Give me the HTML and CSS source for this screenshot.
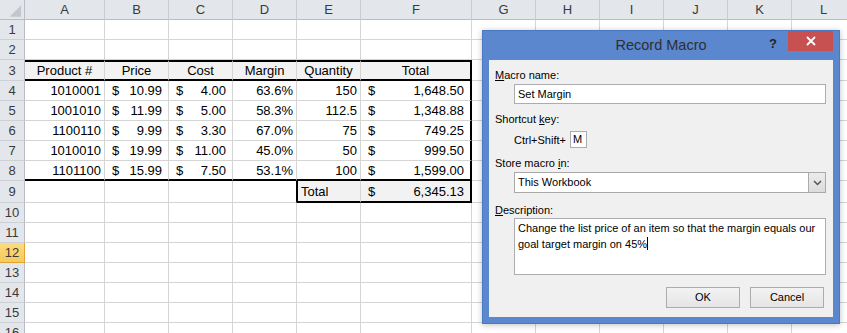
FILE: index.html
```html
<!DOCTYPE html>
<html lang="en">

<head>
    <meta charset="UTF-8">
    <title>Record Macro</title>
    <link rel="stylesheet" href="styles.css">
</head>

<body>
    <div class="sheet">
        <!-- column headers -->
        <div class="corner">
            <svg width="25" height="20" viewBox="0 0 25 20"><polygon points="22,5 22,17 10,17" fill="#c3c7cc" /></svg>
        </div>
        <div class="ch">A</div>
        <div class="ch">B</div>
        <div class="ch">C</div>
        <div class="ch">D</div>
        <div class="ch">E</div>
        <div class="ch">F</div>
        <div class="ch">G</div>
        <div class="ch">H</div>
        <div class="ch">I</div>
        <div class="ch">J</div>
        <div class="ch">K</div>
        <div class="ch">L</div>

        <!-- row 1 -->
        <div class="rh">1</div>
        <div class="c"></div><div class="c"></div><div class="c"></div><div class="c"></div>
        <div class="c"></div><div class="c"></div><div class="c"></div><div class="c"></div>
        <div class="c"></div><div class="c"></div><div class="c"></div><div class="c"></div>

        <!-- row 2 -->
        <div class="rh">2</div>
        <div class="c"></div><div class="c"></div><div class="c"></div><div class="c"></div>
        <div class="c"></div><div class="c"></div><div class="c"></div><div class="c"></div>
        <div class="c"></div><div class="c"></div><div class="c"></div><div class="c"></div>

        <!-- row 3 : table header -->
        <div class="rh">3</div>
        <div class="c hd mid">Product #</div>
        <div class="c hd mid">Price</div>
        <div class="c hd mid">Cost</div>
        <div class="c hd mid">Margin</div>
        <div class="c hd mid">Quantity</div>
        <div class="c hd mid last">Total</div>
        <div class="c"></div><div class="c"></div><div class="c"></div>
        <div class="c"></div><div class="c"></div><div class="c"></div>

        <!-- row 4 -->
        <div class="rh">4</div>
        <div class="c num">1010001</div>
        <div class="c acc"><span>$</span><span>10.99</span></div>
        <div class="c acc"><span>$</span><span>4.00</span></div>
        <div class="c num">63.6%</div>
        <div class="c num">150</div>
        <div class="c acc last"><span>$</span><span>1,648.50</span></div>
        <div class="c"></div><div class="c"></div><div class="c"></div>
        <div class="c"></div><div class="c"></div><div class="c"></div>

        <!-- row 5 -->
        <div class="rh">5</div>
        <div class="c num">1001010</div>
        <div class="c acc"><span>$</span><span>11.99</span></div>
        <div class="c acc"><span>$</span><span>5.00</span></div>
        <div class="c num">58.3%</div>
        <div class="c num">112.5</div>
        <div class="c acc last"><span>$</span><span>1,348.88</span></div>
        <div class="c"></div><div class="c"></div><div class="c"></div>
        <div class="c"></div><div class="c"></div><div class="c"></div>

        <!-- row 6 -->
        <div class="rh">6</div>
        <div class="c num">1100110</div>
        <div class="c acc"><span>$</span><span>9.99</span></div>
        <div class="c acc"><span>$</span><span>3.30</span></div>
        <div class="c num">67.0%</div>
        <div class="c num">75</div>
        <div class="c acc last"><span>$</span><span>749.25</span></div>
        <div class="c"></div><div class="c"></div><div class="c"></div>
        <div class="c"></div><div class="c"></div><div class="c"></div>

        <!-- row 7 -->
        <div class="rh">7</div>
        <div class="c num">1010010</div>
        <div class="c acc"><span>$</span><span>19.99</span></div>
        <div class="c acc"><span>$</span><span>11.00</span></div>
        <div class="c num">45.0%</div>
        <div class="c num">50</div>
        <div class="c acc last"><span>$</span><span>999.50</span></div>
        <div class="c"></div><div class="c"></div><div class="c"></div>
        <div class="c"></div><div class="c"></div><div class="c"></div>

        <!-- row 8 -->
        <div class="rh">8</div>
        <div class="c num bot">1101100</div>
        <div class="c acc bot"><span>$</span><span>15.99</span></div>
        <div class="c acc bot"><span>$</span><span>7.50</span></div>
        <div class="c num bot">53.1%</div>
        <div class="c num bot">100</div>
        <div class="c acc bot last"><span>$</span><span>1,599.00</span></div>
        <div class="c"></div><div class="c"></div><div class="c"></div>
        <div class="c"></div><div class="c"></div><div class="c"></div>

        <!-- row 9 : total -->
        <div class="rh">9</div>
        <div class="c"></div><div class="c"></div><div class="c"></div>
        <div class="c tl"></div>
        <div class="c tot">Total</div>
        <div class="c acc tot last"><span>$</span><span>6,345.13</span></div>
        <div class="c"></div><div class="c"></div><div class="c"></div>
        <div class="c"></div><div class="c"></div><div class="c"></div>

        <!-- rows 10 - 16 -->
        <div class="rh">10</div>
        <div class="c"></div><div class="c"></div><div class="c"></div><div class="c"></div>
        <div class="c"></div><div class="c"></div><div class="c"></div><div class="c"></div>
        <div class="c"></div><div class="c"></div><div class="c"></div><div class="c"></div>

        <div class="rh">11</div>
        <div class="c"></div><div class="c"></div><div class="c"></div><div class="c"></div>
        <div class="c"></div><div class="c"></div><div class="c"></div><div class="c"></div>
        <div class="c"></div><div class="c"></div><div class="c"></div><div class="c"></div>

        <div class="rh sel">12</div>
        <div class="c"></div><div class="c"></div><div class="c"></div><div class="c"></div>
        <div class="c"></div><div class="c"></div><div class="c"></div><div class="c"></div>
        <div class="c"></div><div class="c"></div><div class="c"></div><div class="c"></div>

        <div class="rh">13</div>
        <div class="c"></div><div class="c"></div><div class="c"></div><div class="c"></div>
        <div class="c"></div><div class="c"></div><div class="c"></div><div class="c"></div>
        <div class="c"></div><div class="c"></div><div class="c"></div><div class="c"></div>

        <div class="rh">14</div>
        <div class="c"></div><div class="c"></div><div class="c"></div><div class="c"></div>
        <div class="c"></div><div class="c"></div><div class="c"></div><div class="c"></div>
        <div class="c"></div><div class="c"></div><div class="c"></div><div class="c"></div>

        <div class="rh">15</div>
        <div class="c"></div><div class="c"></div><div class="c"></div><div class="c"></div>
        <div class="c"></div><div class="c"></div><div class="c"></div><div class="c"></div>
        <div class="c"></div><div class="c"></div><div class="c"></div><div class="c"></div>

        <div class="rh">16</div>
        <div class="c"></div><div class="c"></div><div class="c"></div><div class="c"></div>
        <div class="c"></div><div class="c"></div><div class="c"></div><div class="c"></div>
        <div class="c"></div><div class="c"></div><div class="c"></div><div class="c"></div>
    </div>

    <!-- Record Macro window -->
    <div class="dialog">
        <div class="titlebar">
            <div></div>
            <div class="title">Record Macro</div>
            <div class="controls">
                <span class="help">?</span>
                <span class="close">
                    <svg width="10" height="10" viewBox="0 0 10 10">
                        <path d="M1 1 L9 9 M9 1 L1 9" stroke="#fff" stroke-width="1.8" />
                    </svg>
                </span>
            </div>
        </div>

        <div class="panel">
            <div class="label"><u>M</u>acro name:</div>
            <div class="field">Set Margin</div>

            <div class="label label-gap">Shortcut <u>k</u>ey:</div>
            <div class="shortcut">
                <span>Ctrl+Shift+</span>
                <span class="keybox">M</span>
            </div>

            <div class="label label-gap">Store macro <u>i</u>n:</div>
            <div class="select">
                <span class="select-text">This Workbook</span>
                <span class="dd">
                    <svg width="9" height="6" viewBox="0 0 9 6">
                        <path d="M1 1 L4.5 4.5 L8 1" fill="none" stroke="#555" stroke-width="1.5" />
                    </svg>
                </span>
            </div>

            <div class="label desc-label"><u>D</u>escription:</div>
            <div class="desc">Change the list price of an item so that the margin equals our<br>goal target margin on 45%<span class="caret"></span></div>

            <div class="buttons">
                <div class="btn">OK</div>
                <div class="btn">Cancel</div>
            </div>
        </div>
    </div>
</body>

</html>
```

FILE: styles.css
```css
* {
    margin: 0;
    padding: 0;
    box-sizing: border-box;
}

html,
body {
    width: 100%;
    height: 100%;
    overflow: hidden;
    background: #fff;
}

body {
    position: relative;
    font-family: "Liberation Sans", Arial, sans-serif;
}

/* ---------- worksheet ---------- */

.sheet {
    display: grid;
    grid-template-columns: 25px 80px 64px 64px 64px 64px 111px 64px 64px 64px 64px 64px 64px;
    grid-template-rows: 20px 20px 20px 21px 20px 20px 20px 20px 20px 22px 20px 20px 20px 20px 20px 20px 20px;
    font-size: 13px;
    color: #000;
}

.corner,
.ch,
.rh {
    background: #e3e6ea;
    color: #3a3a3a;
    display: flex;
    align-items: center;
    justify-content: center;
}

.corner {
    border-right: 1px solid #b9bdc3;
    border-bottom: 1px solid #b9bdc3;
}

.ch {
    border-right: 1px solid #c9cdd2;
    border-bottom: 1px solid #b9bdc3;
}

.rh {
    border-right: 1px solid #b9bdc3;
    border-bottom: 1px solid #cdd1d6;
}

.rh.sel {
    background: linear-gradient(#fbdc7e, #f6c95a);
    border-right-color: #e1a336;
    border-bottom-color: #e1a336;
}

.c {
    border-right: 1px solid #d4d4d4;
    border-bottom: 1px solid #d4d4d4;
    display: flex;
    align-items: center;
    padding: 0 3px;
    white-space: nowrap;
    overflow: hidden;
}

.num {
    justify-content: flex-end;
}

.mid {
    justify-content: center;
}

.acc {
    justify-content: space-between;
    padding: 0 6px 0 7px;
}

.hd {
    background: #f2f2f2;
    border-top: 2px solid #000;
    border-bottom: 2px solid #000;
}

.last {
    border-right: 2px solid #000;
}

.bot {
    border-bottom: 2px solid #000;
}

.tl {
    border-right-color: #000;
}

.tot {
    background: #f2f2f2;
    border-left: 1px solid #000;
    border-bottom: 2px solid #000;
}

.tot.acc {
    border-left: none;
}

/* ---------- dialog ---------- */

.dialog {
    position: absolute;
    left: 482px;
    top: 30px;
    width: 358px;
    background: #5b87cf;
    border: 1px solid #4a78c2;
    padding: 0 6px 6px 6px;
    font-size: 11px;
    color: #000;
    box-shadow: 0 1px 6px rgba(0, 0, 0, 0.25);
}

.titlebar {
    height: 29px;
    display: grid;
    grid-template-columns: 1fr auto 1fr;
    align-items: start;
}

.title {
    font-size: 14.5px;
    color: #2f2f2f;
    line-height: 29px;
}

.controls {
    display: flex;
    justify-content: flex-end;
    align-items: flex-start;
}

.help {
    font-size: 13px;
    font-weight: bold;
    color: #222;
    margin-top: 5px;
    margin-right: 11px;
}

.close {
    width: 45px;
    height: 20px;
    background: #c75050;
    display: flex;
    align-items: center;
    justify-content: center;
}

.panel {
    background: #f0f0f0;
    height: 257px;
    padding: 8px 7px 9px 6px;
}

.label {
    line-height: 14px;
}

.label-gap {
    margin-top: 8px;
}

.desc-label {
    margin-top: 10px;
}

.field,
.select,
.desc {
    margin-left: 19px;
    width: 312px;
    background: #fff;
    border: 1px solid #abadb3;
}

.field {
    margin-top: 2px;
    height: 20px;
    line-height: 18px;
    padding-left: 3px;
}

.shortcut {
    margin-top: 5px;
    margin-left: 19px;
    height: 17px;
    display: flex;
    align-items: center;
    gap: 4px;
}

.keybox {
    width: 17px;
    height: 17px;
    background: #fff;
    border: 1px solid #abadb3;
    line-height: 15px;
    padding-left: 2px;
}

.select {
    margin-top: 2px;
    height: 21px;
    display: flex;
    align-items: stretch;
    border-color: #a9a9a9;
}

.select-text {
    flex: 1;
    line-height: 19px;
    padding-left: 3px;
}

.dd {
    width: 17px;
    background: linear-gradient(#ececec, #dcdcdc);
    border-left: 1px solid #acacac;
    display: flex;
    align-items: center;
    justify-content: center;
}

.desc {
    margin-top: 1px;
    height: 57px;
    padding: 1px 3px;
    line-height: 16px;
    white-space: nowrap;
    overflow: hidden;
}

.caret {
    display: inline-block;
    width: 1px;
    height: 13px;
    background: #000;
    vertical-align: -2px;
}

.buttons {
    margin-top: 12px;
    display: flex;
    justify-content: flex-end;
    gap: 10px;
    padding-right: 2px;
}

.btn {
    width: 74px;
    height: 21px;
    line-height: 19px;
    text-align: center;
    background: linear-gradient(#f2f2f2, #e5e5e5);
    border: 1px solid #acacac;
}
```
